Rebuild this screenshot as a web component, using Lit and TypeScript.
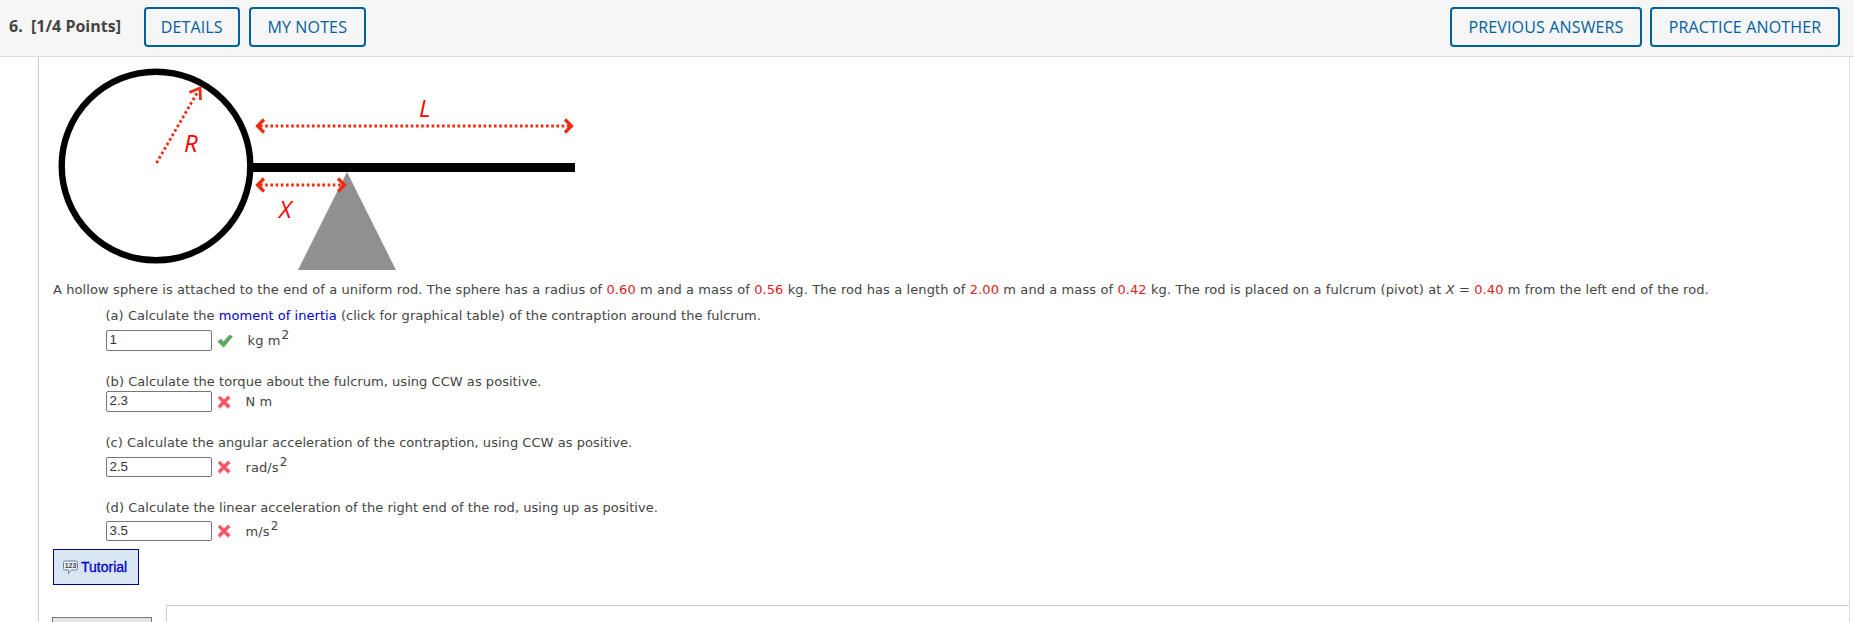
import { LitElement, html, css } from "lit";
import { customElement } from "lit/decorators.js";

const check = html`<svg class="mark" width="16" height="14" viewBox="0 0 16 14"><path d="M.8 7.6 L4 5.2 L6.4 8 L12.6 1 L15.4 2.6 L6.6 13.2 Z" fill="#5fa85f" stroke="#4f8f4f" stroke-width=".6"/></svg>`;
const cross = html`<svg class="mark" width="14" height="14" viewBox="0 0 14 14"><path d="M1 3 L3 1 L7 4.6 L11 .8 L13.4 3 L9.4 7 L13.4 11 L11 13.4 L7 9.5 L3 13.4 L.8 11 L4.6 7 Z" fill="#f4555f" stroke="#f58a90" stroke-width=".6"/></svg>`;

@customElement("app-root")
export class AppRoot extends LitElement {
  static styles = css`
    :host { display: block; width: 1854px; height: 622px; overflow: hidden; background: #fff; font-family: "DejaVu Sans", sans-serif; font-size: 13px; letter-spacing: .1px; color: #444; }
    .head { height: 57px; box-sizing: border-box; background: #f6f6f6; border-bottom: 1px solid #ddd; display: flex; align-items: flex-start; padding: 7px 14px 0 9px; font-family: "Open Sans", sans-serif; letter-spacing: 0; }
    .num { font-weight: 700; font-size: 16px; color: #444; line-height: 38px; width: 134.5px; white-space: pre; }
    .btn { box-sizing: border-box; height: 40px; border: 2px solid #00609f; border-radius: 4px; color: #00609f; font-size: 16px; font-weight: 500; letter-spacing: .15px; line-height: 36px; text-align: center; margin-right: 9px; }
    .b1 { width: 96.5px; }
    .b2 { width: 116.5px; }
    .b3 { width: 192px; margin-right: 8px; }
    .b4 { width: 190px; margin-right: 0; }
    .spacer { flex: 1; }
    .body { margin-left: 38px; margin-right: 4px; height: 565px; border-left: 1px solid #ccc; border-right: 1px solid #ddd; padding: 0 0 0 14px; box-sizing: border-box; }
    .fig { display: block; margin: 0 0 0 -14px; }
    .lead { line-height: 18px; margin: 6px 0 0 0; white-space: nowrap; }
    .val { color: #d22; }
    .q { margin-left: 52.5px; margin-top: 23px; }
    .q.first { margin-top: 9px; }
    .prompt { line-height: 16px; white-space: nowrap; letter-spacing: .04px; }
    .link { color: #0000c8; }
    .row { display: flex; align-items: center; height: 21px; }
    .row.short { height: 20px; }
    .row.m1 { margin-top: 1px; }
    .row.m5 { margin-top: 5px; }
    .row.m6 { margin-top: 6px; }
    .box { box-sizing: border-box; width: 106px; height: 100%; border: 1px solid #767676; border-radius: 2px; font: 13.33px "Liberation Sans", sans-serif; letter-spacing: 0; color: #333; padding-left: 3px; line-height: 18px; }
    .mark { margin-left: 5px; flex: none; }
    .unit { margin-left: 15px; }
    .unit sup { font-size: 12px; line-height: 0; position: relative; vertical-align: baseline; top: -6px; margin-left: 1px; }
    .tut { box-sizing: border-box; display: flex; align-items: center; gap: 3px; width: 86px; height: 36px; border: 1px solid #00008b; background: #d9e5f0; color: #0000c8; font: 14px "Liberation Sans", sans-serif; letter-spacing: 0; padding-left: 9px; margin-top: 8px; -webkit-text-stroke: .3px; }
    .tut svg { -webkit-text-stroke: 0; }
    .bottom { display: flex; align-items: flex-start; margin-top: 20px; }
    .submit { box-sizing: border-box; width: 100px; height: 30px; margin: 12px 14px 0 -1px; border: 1px solid #777; background: #e4e4e4; font: 13px "Liberation Sans", sans-serif; letter-spacing: 0; color: #333; text-align: center; line-height: 24px; }
    .panel { flex: 1; height: 40px; border: 1px solid #ccc; border-right: none; }
  `;

  render() {
    return html`
      <div class="head">
        <span class="num">6.  [1/4 Points]</span>
        <span class="btn b1">DETAILS</span><span class="btn b2">MY NOTES</span>
        <span class="spacer"></span>
        <span class="btn b3">PREVIOUS ANSWERS</span><span class="btn b4">PRACTICE ANOTHER</span>
      </div>
      <div class="body">
        <svg class="fig" width="600" height="218" viewBox="39 57 600 218">
          <circle cx="156" cy="166" r="94.3" fill="none" stroke="#000" stroke-width="6.4"/>
          <rect x="253" y="163" width="322" height="9" fill="#000"/>
          <polygon points="347,172 396,270 298,270" fill="#909090"/>
          <g stroke="#f32a10" fill="none" stroke-width="2.8">
            <line x1="260" y1="126" x2="570" y2="126" stroke-dasharray="2.6 2.6"/>
            <polyline points="264,119.5 257.5,126 264,132.5" stroke-width="3.2"/>
            <polyline points="565,119.5 571.5,126 565,132.5" stroke-width="3.2"/>
            <line x1="260" y1="185" x2="342" y2="185" stroke-dasharray="2.6 2.6"/>
            <polyline points="264,178.5 257.5,185 264,191.5" stroke-width="3.2"/>
            <polyline points="338,178.5 344.5,185 338,191.5" stroke-width="3.2"/>
            <line x1="156.5" y1="163" x2="197" y2="93" stroke-dasharray="2.6 2.6"/>
            <polyline points="189.5,92.5 200,88 200.5,100" stroke-width="2.8"/>
          </g>
          <g fill="#f00" font-family="Open Sans" font-style="italic" font-size="24">
            <text x="419" y="117">L</text>
            <text x="184" y="152">R</text>
            <text x="279" y="218">X</text>
          </g>
        </svg>
        <div class="lead">A hollow sphere is attached to the end of a uniform rod. The sphere has a radius of <span class="val">0.60</span> m and a mass of <span class="val">0.56</span> kg. The rod has a length of <span class="val">2.00</span> m and a mass of <span class="val">0.42</span> kg. The rod is placed on a fulcrum (pivot) at <i>X</i> = <span class="val">0.40</span> m from the left end of the rod.</div>
        <div class="q first">
          <div class="prompt">(a) Calculate the <span class="link">moment of inertia</span> (click for graphical table) of the contraption around the fulcrum.</div>
          <div class="row m6"><span class="box">1</span>${check}<span class="unit">kg m<sup>2</sup></span></div>
        </div>
        <div class="q">
          <div class="prompt">(b) Calculate the torque about the fulcrum, using CCW as positive.</div>
          <div class="row m1"><span class="box">2.3</span>${cross}<span class="unit">N m</span></div>
        </div>
        <div class="q">
          <div class="prompt">(c) Calculate the angular acceleration of the contraption, using CCW as positive.</div>
          <div class="row short m6"><span class="box">2.5</span>${cross}<span class="unit">rad/s<sup>2</sup></span></div>
        </div>
        <div class="q">
          <div class="prompt">(d) Calculate the linear acceleration of the right end of the rod, using up as positive.</div>
          <div class="row short m5"><span class="box">3.5</span>${cross}<span class="unit">m/s<sup>2</sup></span></div>
        </div>
        <div class="tut">
          <svg width="15" height="15" viewBox="0 0 15 15"><path d="M2 1 H13 Q14.5 1 14.5 2.5 V8.5 Q14.5 10 13 10 H8.5 L5.5 13.5 V10 H2 Q.5 10 .5 8.5 V2.5 Q.5 1 2 1 Z" fill="#eef3fa" stroke="#6a7fb0"/><text x="7.5" y="8" font-size="7" font-family="Liberation Sans" font-weight="700" fill="#445" text-anchor="middle">123</text></svg>
          Tutorial
        </div>
        <div class="bottom">
          <div class="submit">Submit Answer</div>
          <div class="panel"></div>
        </div>
      </div>
    `;
  }
}
